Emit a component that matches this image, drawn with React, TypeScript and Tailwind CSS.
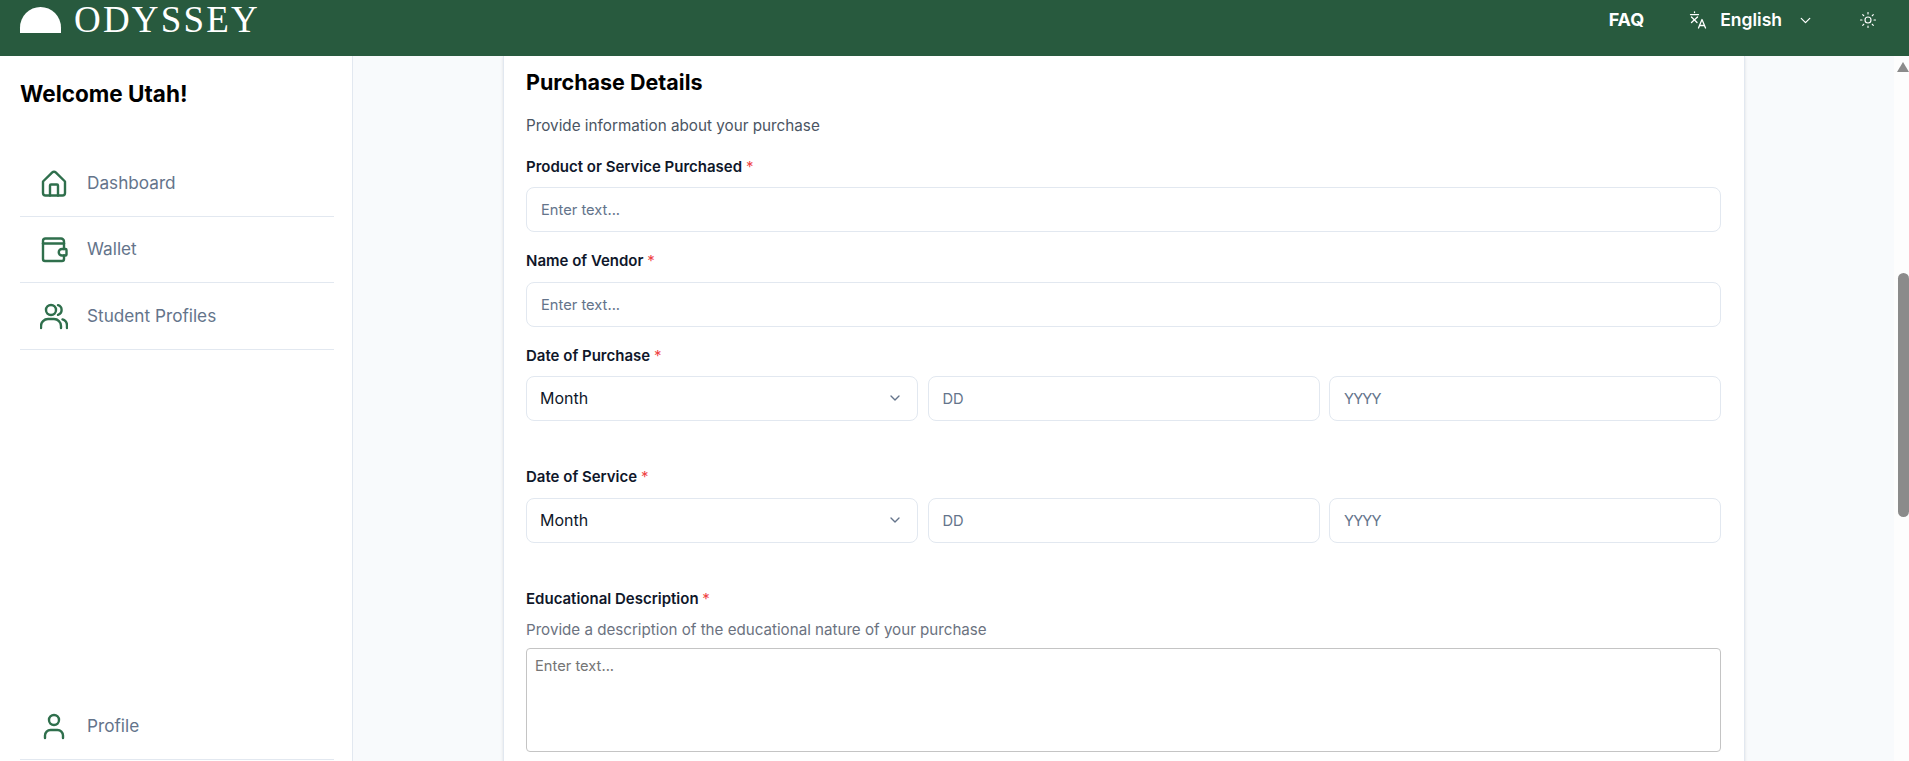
import { ChevronDown, Sun } from 'lucide-react';

const sans = "font-['Inter','Noto_Sans',sans-serif]";

function HomeIcon() {
  return (
    <svg width="28" height="28" viewBox="0 0 28 28" fill="none" stroke="#2f6f4c" strokeWidth="2.4" strokeLinecap="round" strokeLinejoin="round">
      <path d="M3 12.5 12.3 3.4a2.4 2.4 0 0 1 3.4 0L25 12.5V24a2.5 2.5 0 0 1-2.5 2.5h-17A2.5 2.5 0 0 1 3 24z" />
      <path d="M10 26.5V16.5a1 1 0 0 1 1-1h6a1 1 0 0 1 1 1v10" />
    </svg>
  );
}

function WalletIcon() {
  return (
    <svg width="28" height="28" viewBox="0 0 28 28" fill="none" stroke="#2f6f4c" strokeWidth="2.4" strokeLinecap="round" strokeLinejoin="round">
      <path d="M24 14V6.5A3 3 0 0 0 21 3.5H5.5A2.5 2.5 0 0 0 3 6v18a2 2 0 0 0 2 2h17a2 2 0 0 0 2-2v-3.5" />
      <path d="M3 8.5h21" />
      <path d="M22 14h3.5a1 1 0 0 1 1 1v4.5a1 1 0 0 1-1 1H22a3.25 3.25 0 0 1 0-6.5z" />
    </svg>
  );
}

function UsersIcon() {
  return (
    <svg width="28" height="28" viewBox="0 0 28 28" fill="none" stroke="#2f6f4c" strokeWidth="2.4" strokeLinecap="round" strokeLinejoin="round">
      <circle cx="11" cy="8" r="5" />
      <path d="M18 3.2a5 5 0 0 1 0 9.6" />
      <path d="M1 26v-2a7 7 0 0 1 7-7h6a7 7 0 0 1 7 7v2" />
      <path d="M22.5 17.4a6.5 6.5 0 0 1 4.5 6.2V26" />
    </svg>
  );
}

function ProfileIcon() {
  return (
    <svg width="28" height="28" viewBox="0 0 28 28" fill="none" stroke="#2f6f4c" strokeWidth="2.4" strokeLinecap="round" strokeLinejoin="round">
      <circle cx="14" cy="8" r="5" />
      <path d="M5 26v-2.5a5.5 5.5 0 0 1 5.5-5.5h7a5.5 5.5 0 0 1 5.5 5.5V26" />
    </svg>
  );
}

function TranslateIcon() {
  return (
    <svg width="18" height="18" viewBox="0 0 18 18" fill="none" stroke="#ffffff" strokeWidth="1.3" strokeLinecap="round" strokeLinejoin="round">
      <path d="M1.5 3.6h8" />
      <path d="M5.5 1v.6" />
      <path d="M2.5 6 8 11.5" />
      <path d="M8.5 6 2.5 11.5" />
      <path d="M9.5 17 13 8.5l3.5 8.5" />
      <path d="M10.6 14.5h4.8" />
    </svg>
  );
}

function NavRow({ icon, label }: { icon: React.ReactNode; label: string }) {
  return (
    <div className="flex h-[66.5px] items-center gap-[19px] border-b border-[#e2e8f0] pl-[20px]">
      {icon}
      <span className="text-[17.2px] text-[#64748b]">{label}</span>
    </div>
  );
}

function Label({ text, className = '' }: { text: string; className?: string }) {
  return (
    <div className={`text-[15px] leading-[20px] font-semibold text-[#0f172a] ${className}`}>
      {text} <span className="font-normal text-[#ef4444]">*</span>
    </div>
  );
}

function TextInput() {
  return (
    <input
      placeholder="Enter text..."
      className="h-[45px] w-full rounded-lg border border-[#e2e8f0] bg-white px-[14px] text-[14.7px] outline-none placeholder:text-[#64748b]"
    />
  );
}

function DateRow() {
  return (
    <div className="grid grid-cols-3 gap-[9.5px]">
      <button className="flex h-[45px] items-center justify-between rounded-lg border border-[#e2e8f0] bg-white pr-[14px] pb-[2px] pl-[13px] text-[16px] text-[#0f172a]">
        Month
        <ChevronDown size={16} color="#64748b" />
      </button>
      <input placeholder="DD" className="h-[45px] w-full rounded-lg border border-[#e2e8f0] bg-white px-[14px] text-[14.7px] outline-none placeholder:text-[#64748b]" />
      <input placeholder="YYYY" className="h-[45px] w-full rounded-lg border border-[#e2e8f0] bg-white px-[14px] text-[14.7px] tracking-[-0.8px] outline-none placeholder:text-[#64748b]" />
    </div>
  );
}

export default function App() {
  return (
    <div className={`flex h-screen flex-col overflow-hidden bg-[#f8fafc] ${sans}`}>
      {/* Header */}
      <header className="flex h-[56px] shrink-0 items-start justify-between bg-[#285a3e] text-white">
        <div className="flex items-start pt-[7px] pl-[20px]">
          <div className="h-[26px] w-[41px] rounded-t-full bg-white" />
          <span className="ml-[13px] font-['Liberation_Serif',serif] text-[37px] leading-[26px] tracking-[2.2px]">ODYSSEY</span>
        </div>
        <div className="flex items-center pt-[10px] pr-[32px]">
          <span className="text-[18px] leading-[20px] font-bold">FAQ</span>
          <span className="ml-[45px]"><TranslateIcon /></span>
          <span className="ml-[13px] text-[17.5px] leading-[20px] font-semibold">English</span>
          <ChevronDown size={17} className="ml-[15px]" strokeWidth={1.75} />
          <Sun size={18} className="ml-[45px]" strokeWidth={1.5} />
        </div>
      </header>

      <div className="flex min-h-0 flex-1">
        {/* Sidebar */}
        <aside className="flex w-[353px] shrink-0 flex-col border-r border-[#e2e8f0] bg-white pr-[18px] pl-[20px]">
          <h2 className="mt-[24px] text-[22.5px] leading-[28px] font-bold text-black">Welcome Utah!</h2>
          <nav className="mt-[42px]">
            <NavRow icon={<HomeIcon />} label="Dashboard" />
            <NavRow icon={<WalletIcon />} label="Wallet" />
            <NavRow icon={<UsersIcon />} label="Student Profiles" />
          </nav>
          <div className="mt-auto mb-[1px]">
            <NavRow icon={<ProfileIcon />} label="Profile" />
          </div>
        </aside>

        {/* Main */}
        <main className="flex min-w-0 flex-1 justify-center overflow-hidden">
          <section className="h-[800px] w-[1242px] shrink-0 border-x border-[#e2e8f0] bg-white px-[22.5px] shadow-sm">
            <h1 className="mt-[12px] text-[21.5px] leading-[28px] font-bold text-black">Purchase Details</h1>
            <p className="mt-[20px] text-[15.25px] leading-[20px] text-[#4b5563]">Provide information about your purchase</p>
            <Label text="Product or Service Purchased" className="mt-[21px]" />
            <div className="mt-[10px]"><TextInput /></div>
            <Label text="Name of Vendor" className="mt-[19px]" />
            <div className="mt-[11px]"><TextInput /></div>
            <Label text="Date of Purchase" className="mt-[19px]" />
            <div className="mt-[10px]"><DateRow /></div>
            <Label text="Date of Service" className="mt-[46px]" />
            <div className="mt-[11px]"><DateRow /></div>
            <Label text="Educational Description" className="mt-[46px]" />
            <p className="mt-[11px] text-[15.15px] leading-[20px] text-[#6b7280]">Provide a description of the educational nature of your purchase</p>
            <textarea
              placeholder="Enter text..."
              className="mt-[8px] block h-[104px] w-full resize-none rounded border border-[#c4c4c4] bg-white px-[8px] py-[6px] text-[14.7px] outline-none placeholder:text-[#757575]"
            />
          </section>
        </main>

        {/* Scrollbar */}
        <div className="flex w-[15px] shrink-0 flex-col items-end bg-[#fdfdfd]">
          <svg width="12" height="10" viewBox="0 0 12 10" className="mt-[6px]">
            <path d="M6 0 12 10H0z" fill="#8b8b8b" />
          </svg>
          <div className="mt-[201px] h-[244px] w-[11px] rounded-full bg-[#8b8b8b]" />
        </div>
      </div>
    </div>
  );
}
